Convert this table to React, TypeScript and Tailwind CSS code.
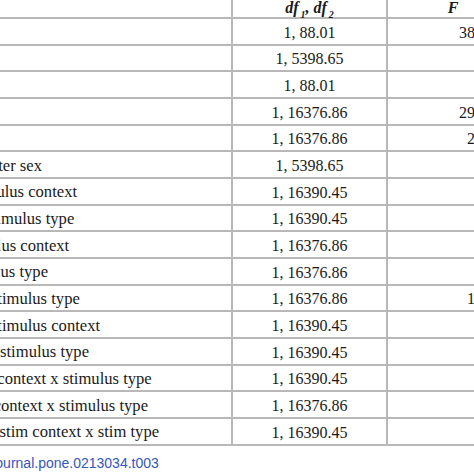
import React from "react";

const rows: [string, string, string][] = [
  ["Rater sex", "1, 88.01", "386.29"],
  ["Speaker sex", "1, 5398.65", "3.12"],
  ["Rater age", "1, 88.01", "0.57"],
  ["Context", "1, 16376.86", "293.41"],
  ["Stimulus type", "1, 16376.86", "24.18"],
  ["Speaker sex x rater sex", "1, 5398.65", "1.06"],
  ["Rater sex x stimulus context", "1, 16390.45", "0.88"],
  ["Speaker sex x stimulus type", "1, 16390.45", "2.45"],
  ["Listener x stimulus context", "1, 16376.86", "3.71"],
  ["Speaker x stimulus type", "1, 16376.86", "0.12"],
  ["Rater gender x stimulus type", "1, 16376.86", "15.62"],
  ["Rater gender x stimulus context", "1, 16390.45", "1.94"],
  ["Listener voice x stimulus type", "1, 16390.45", "0.35"],
  ["Role x stimulus context x stimulus type", "1, 16390.45", "2.87"],
  ["Age x stimulus context x stimulus type", "1, 16376.86", "0.09"],
  ["Listener x age x stim context x stim type", "1, 16390.45", "1.23"],
];

export default function App() {
  return (
    <div className="w-[474px] h-[474px] overflow-hidden bg-white">
      <div
        className="-ml-[115px] w-[633px] text-[16px] text-[#1a1a1a]"
        style={{ fontFamily: '"Liberation Serif", "Times New Roman", serif' }}
      >
        <div className="flex h-[19px] border-b-2 border-[#b8b8b8]">
          <div className="w-[348px] border-r-2 border-[#b8b8b8]" />
          <div className="w-[155px] border-r-2 border-[#b8b8b8] flex justify-center leading-[16px] font-bold italic">
            <span>
              df<sub className="text-[10px] align-[-2px] ml-[2px]">1</sub>, df
              <sub className="text-[10px] align-[-2px] ml-[2px]">2</sub>
            </span>
          </div>
          <div className="w-[130px] flex justify-center leading-[16px] font-bold italic">
            F
          </div>
        </div>
        {rows.map((r, i) => (
          <div key={i} className="flex h-[26.67px] border-b-2 border-[#b8b8b8]">
            <div className="w-[348px] border-r-2 border-[#b8b8b8] pl-[4px] pt-[3px] flex items-center overflow-hidden whitespace-nowrap text-[16.6px]">
              {r[0]}
            </div>
            <div className="w-[155px] border-r-2 border-[#b8b8b8] pt-[3px] flex items-center justify-center whitespace-nowrap">
              {r[1]}
            </div>
            <div className="w-[130px] pr-[15px] pt-[3px] flex items-center justify-end whitespace-nowrap">
              {r[2]}
            </div>
          </div>
        ))}
      </div>
      <div
        className="-ml-[151px] mt-[9px] text-[14px] leading-[16px] text-[#3556c0] whitespace-nowrap"
        style={{ fontFamily: '"Liberation Sans", Arial, sans-serif' }}
      >
        https://doi.org/10.1371/journal.pone.0213034.t003
      </div>
    </div>
  );
}
